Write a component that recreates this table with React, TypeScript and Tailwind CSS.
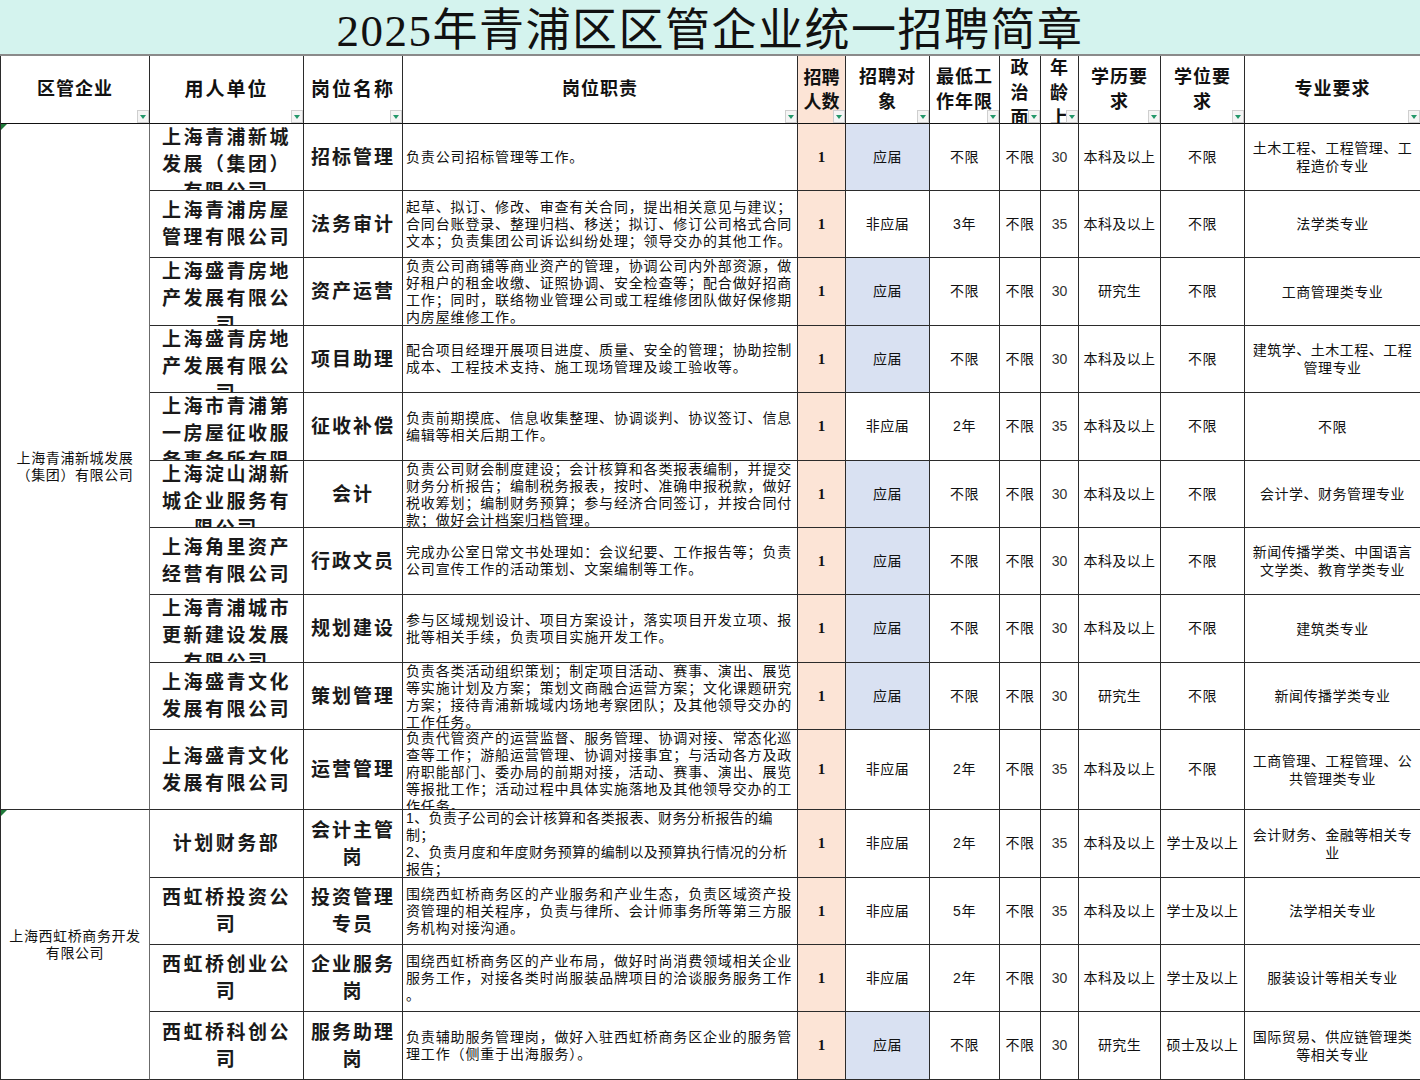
import React from 'react';

type Row = {
  unit: string[];
  post: string[];
  duty: string[];
  tight?: boolean;
  target: string;
  years: string;
  political: string;
  age: string;
  edu: string;
  degree: string;
  major: string[];
};

const rows: Row[] = [
  {
    unit: ['上海青浦新城', '发展（集团）', '有限公司'],
    post: ['招标管理'],
    duty: ['负责公司招标管理等工作。'],
    target: '应届',
    years: '不限',
    political: '不限',
    age: '30',
    edu: '本科及以上',
    degree: '不限',
    major: ['土木工程、工程管理、工', '程造价专业'],
  },
  {
    unit: ['上海青浦房屋', '管理有限公司'],
    post: ['法务审计'],
    duty: [
      '起草、拟订、修改、审查有关合同，提出相关意见与建议；',
      '合同台账登录、整理归档、移送；拟订、修订公司格式合同',
      '文本；负责集团公司诉讼纠纷处理；领导交办的其他工作。',
    ],
    target: '非应届',
    years: '3年',
    political: '不限',
    age: '35',
    edu: '本科及以上',
    degree: '不限',
    major: ['法学类专业'],
  },
  {
    unit: ['上海盛青房地', '产发展有限公', '司'],
    post: ['资产运营'],
    duty: [
      '负责公司商铺等商业资产的管理，协调公司内外部资源，做',
      '好租户的租金收缴、证照协调、安全检查等；配合做好招商',
      '工作；同时，联络物业管理公司或工程维修团队做好保修期',
      '内房屋维修工作。',
    ],
    target: '应届',
    years: '不限',
    political: '不限',
    age: '30',
    edu: '研究生',
    degree: '不限',
    major: ['工商管理类专业'],
  },
  {
    unit: ['上海盛青房地', '产发展有限公', '司'],
    post: ['项目助理'],
    duty: [
      '配合项目经理开展项目进度、质量、安全的管理；协助控制',
      '成本、工程技术支持、施工现场管理及竣工验收等。',
    ],
    target: '应届',
    years: '不限',
    political: '不限',
    age: '30',
    edu: '本科及以上',
    degree: '不限',
    major: ['建筑学、土木工程、工程', '管理专业'],
  },
  {
    unit: ['上海市青浦第', '一房屋征收服', '务事务所有限', '公司'],
    post: ['征收补偿'],
    duty: [
      '负责前期摸底、信息收集整理、协调谈判、协议签订、信息',
      '编辑等相关后期工作。',
    ],
    target: '非应届',
    years: '2年',
    political: '不限',
    age: '35',
    edu: '本科及以上',
    degree: '不限',
    major: ['不限'],
  },
  {
    unit: ['上海淀山湖新', '城企业服务有', '限公司'],
    post: ['会计'],
    duty: [
      '负责公司财会制度建设；会计核算和各类报表编制，并提交',
      '财务分析报告；编制税务报表，按时、准确申报税款，做好',
      '税收筹划；编制财务预算；参与经济合同签订，并按合同付',
      '款；做好会计档案归档管理。',
    ],
    target: '应届',
    years: '不限',
    political: '不限',
    age: '30',
    edu: '本科及以上',
    degree: '不限',
    major: ['会计学、财务管理专业'],
  },
  {
    unit: ['上海角里资产', '经营有限公司'],
    post: ['行政文员'],
    duty: [
      '完成办公室日常文书处理如：会议纪要、工作报告等；负责',
      '公司宣传工作的活动策划、文案编制等工作。',
    ],
    target: '应届',
    years: '不限',
    political: '不限',
    age: '30',
    edu: '本科及以上',
    degree: '不限',
    major: ['新闻传播学类、中国语言', '文学类、教育学类专业'],
  },
  {
    unit: ['上海青浦城市', '更新建设发展', '有限公司'],
    post: ['规划建设'],
    duty: [
      '参与区域规划设计、项目方案设计，落实项目开发立项、报',
      '批等相关手续，负责项目实施开发工作。',
    ],
    target: '应届',
    years: '不限',
    political: '不限',
    age: '30',
    edu: '本科及以上',
    degree: '不限',
    major: ['建筑类专业'],
  },
  {
    unit: ['上海盛青文化', '发展有限公司'],
    post: ['策划管理'],
    duty: [
      '负责各类活动组织策划；制定项目活动、赛事、演出、展览',
      '等实施计划及方案；策划文商融合运营方案；文化课题研究',
      '方案；接待青浦新城域内场地考察团队；及其他领导交办的',
      '工作任务。',
    ],
    target: '应届',
    years: '不限',
    political: '不限',
    age: '30',
    edu: '研究生',
    degree: '不限',
    major: ['新闻传播学类专业'],
  },
  {
    unit: ['上海盛青文化', '发展有限公司'],
    post: ['运营管理'],
    duty: [
      '负责代管资产的运营监督、服务管理、协调对接、常态化巡',
      '查等工作；游船运营管理、协调对接事宜；与活动各方及政',
      '府职能部门、委办局的前期对接，活动、赛事、演出、展览',
      '等报批工作；活动过程中具体实施落地及其他领导交办的工',
      '作任务。',
    ],
    target: '非应届',
    years: '2年',
    political: '不限',
    age: '35',
    edu: '本科及以上',
    degree: '不限',
    major: ['工商管理、工程管理、公', '共管理类专业'],
  },
  {
    unit: ['计划财务部'],
    post: ['会计主管', '岗'],
    duty: [
      '1、负责子公司的会计核算和各类报表、财务分析报告的编',
      '制；',
      '2、负责月度和年度财务预算的编制以及预算执行情况的分析',
      '报告；',
    ],
    tight: true,
    target: '非应届',
    years: '2年',
    political: '不限',
    age: '35',
    edu: '本科及以上',
    degree: '学士及以上',
    major: ['会计财务、金融等相关专', '业'],
  },
  {
    unit: ['西虹桥投资公', '司'],
    post: ['投资管理', '专员'],
    duty: [
      '围绕西虹桥商务区的产业服务和产业生态，负责区域资产投',
      '资管理的相关程序，负责与律所、会计师事务所等第三方服',
      '务机构对接沟通。',
    ],
    target: '非应届',
    years: '5年',
    political: '不限',
    age: '35',
    edu: '本科及以上',
    degree: '学士及以上',
    major: ['法学相关专业'],
  },
  {
    unit: ['西虹桥创业公', '司'],
    post: ['企业服务', '岗'],
    duty: [
      '围绕西虹桥商务区的产业布局，做好时尚消费领域相关企业',
      '服务工作，对接各类时尚服装品牌项目的洽谈服务服务工作',
      '。',
    ],
    target: '非应届',
    years: '2年',
    political: '不限',
    age: '30',
    edu: '本科及以上',
    degree: '学士及以上',
    major: ['服装设计等相关专业'],
  },
  {
    unit: ['西虹桥科创公', '司'],
    post: ['服务助理', '岗'],
    duty: [
      '负责辅助服务管理岗，做好入驻西虹桥商务区企业的服务管',
      '理工作（侧重于出海服务）。',
    ],
    target: '应届',
    years: '不限',
    political: '不限',
    age: '30',
    edu: '研究生',
    degree: '硕士及以上',
    major: ['国际贸易、供应链管理类', '等相关专业'],
  },
];

const cell =
  'relative flex flex-col items-center overflow-hidden border-r border-b border-[#2b2b2b] text-center [justify-content:safe_center]';

const Filter = () => (
  <span className="absolute bottom-0 right-0 flex h-[13px] w-[12px] items-center justify-center border border-[#cfcfcf] bg-[#f5f5f5]">
    <span className="h-0 w-0 border-x-[3px] border-t-[4px] border-x-transparent border-t-[#23976a]" />
  </span>
);

const Corner = () => (
  <span className="absolute left-0 top-0 h-0 w-0 border-r-[6px] border-t-[6px] border-r-transparent border-t-[#1f7a3a]" />
);

const Head = ({ lines, big }: { lines: string[]; big?: boolean }) => (
  <div className={`${cell} border-b-[#111] font-bold text-[#111]`}>
    {lines.map((l) => (
      <span
        key={l}
        className={
          big
            ? 'whitespace-nowrap text-[19px] leading-[27px] tracking-[2px]'
            : 'whitespace-nowrap text-[18px] leading-[25px] tracking-[1px]'
        }
      >
        {l}
      </span>
    ))}
    <Filter />
  </div>
);

const Lines = ({ lines, className }: { lines: string[]; className: string }) => (
  <>
    {lines.map((l, i) => (
      <span key={i} className={`whitespace-nowrap ${className}`}>
        {l}
      </span>
    ))}
  </>
);

export default function App() {
  return (
    <div className="w-[1420px] h-[1080px] overflow-hidden bg-white font-['Liberation_Sans','Noto_Sans_CJK_SC',sans-serif] text-[#111]">
      <div className="flex h-[56px] items-center justify-center border-b-2 border-[#8a8a8a] bg-[#d4f3ee] pt-[8px] font-['Liberation_Serif','Noto_Sans_CJK_SC',serif] text-[45px] leading-[46px] tracking-[1.5px] text-[#111]">
        2025年青浦区区管企业统一招聘简章
      </div>

      <div className="grid grid-cols-[149px_154px_99px_395px_48px_84px_70px_41px_38px_82px_84px_176px] grid-rows-[68px_67px_67px_68px_67px_68px_67px_67px_68px_67px_80px_68px_67px_67px_68px] border-l border-[#2b2b2b]">
        <Head lines={['区管企业']} />
        <Head lines={['用人单位']} big />
        <Head lines={['岗位名称']} big />
        <Head lines={['岗位职责']} />
        <div className={`${cell} border-b-[#111] bg-[#fce4d6] font-bold`}>
          <span className="whitespace-nowrap text-[18px] leading-[24px]">招聘</span>
          <span className="whitespace-nowrap text-[18px] leading-[24px]">人数</span>
          <Filter />
        </div>
        <Head lines={['招聘对', '象']} />
        <Head lines={['最低工', '作年限']} />
        <Head lines={['政', '治', '面', '貌']} />
        <Head lines={['年', '龄', '上', '限']} />
        <Head lines={['学历要', '求']} />
        <Head lines={['学位要', '求']} />
        <Head lines={['专业要求']} />

        {rows.map((r, i) => (
          <React.Fragment key={i}>
            {i === 0 && (
              <div className={`${cell} row-span-10 border-r-[#6b6b6b]`}>
                <Corner />
                <Lines
                  lines={['上海青浦新城发展', '（集团）有限公司']}
                  className="text-[14px] leading-[17px] tracking-[0.6px]"
                />
              </div>
            )}
            {i === 10 && (
              <div className={`${cell} row-span-4 border-r-[#6b6b6b]`}>
                <Corner />
                <Lines
                  lines={['上海西虹桥商务开发', '有限公司']}
                  className="text-[14px] leading-[17px] tracking-[0.6px]"
                />
              </div>
            )}
            <div className={`${cell} col-start-2 font-bold text-[#1a1a1a]`}>
              <Lines lines={r.unit} className="text-[19px] leading-[27px] tracking-[2.5px]" />
            </div>
            <div className={`${cell} font-bold text-[#1a1a1a]`}>
              <Lines lines={r.post} className="text-[19px] leading-[27px] tracking-[2px]" />
            </div>
            <div className={`${cell} items-start px-[3px] text-left`}>
              <Lines
                lines={r.duty}
                className={
                  r.tight
                    ? 'text-[14px] leading-[17px] tracking-[0.35px]'
                    : 'text-[14px] leading-[17px] tracking-[0.85px]'
                }
              />
            </div>
            <div className={`${cell} bg-[#fce4d6]`}>
              <span className="font-['Liberation_Serif',serif] text-[15px] font-bold">1</span>
            </div>
            <div className={`${cell} ${r.target === '应届' ? 'bg-[#d9e1f2]' : ''}`}>
              <span className="text-[14px] tracking-[0.5px]">{r.target}</span>
            </div>
            <div className={cell}>
              <span className="text-[14px] tracking-[0.5px]">{r.years}</span>
            </div>
            <div className={cell}>
              <span className="text-[14px] tracking-[0.5px]">{r.political}</span>
            </div>
            <div className={cell}>
              <span className="text-[14px] text-[#333]">{r.age}</span>
            </div>
            <div className={cell}>
              <span className="whitespace-nowrap text-[14px] tracking-[0.4px]">{r.edu}</span>
            </div>
            <div className={cell}>
              <span className="whitespace-nowrap text-[14px] tracking-[0.4px]">{r.degree}</span>
            </div>
            <div className={cell}>
              <Lines lines={r.major} className="text-[14px] leading-[18px] tracking-[0.5px]" />
            </div>
          </React.Fragment>
        ))}
      </div>
    </div>
  );
}
